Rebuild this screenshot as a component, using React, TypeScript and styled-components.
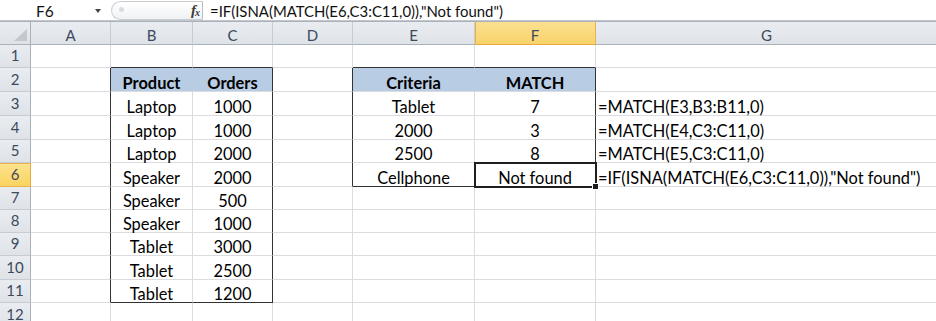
import React from 'react';
import styled, { createGlobalStyle, css } from 'styled-components';

const GlobalStyle = createGlobalStyle`
  html, body { margin: 0; padding: 0; background: #fff; overflow: hidden; }
  body { width: 936px; height: 321px; font-family: Lato, "Liberation Sans", sans-serif; }
`;

const Window = styled.div`
  width: 936px;
  height: 321px;
  overflow: hidden;
  display: flex;
  flex-direction: column;
  background: #fff;
`;

const FormulaBar = styled.div`
  display: flex;
  align-items: stretch;
  height: 20px;
  background: #fff;
  font-size: 14.9px;
  color: #111;
`;

const NameBox = styled.div`
  width: 111px;
  box-sizing: border-box;
  padding: 1px 10px 0 36px;
  display: flex;
  align-items: center;
  font-size: 15.5px;
`;

const DropArrow = styled.span`
  margin-left: auto;
  width: 0;
  height: 0;
  border-left: 3.5px solid transparent;
  border-right: 3.5px solid transparent;
  border-top: 4px solid #444;
`;

const Capsule = styled.div`
  width: 92px;
  box-sizing: border-box;
  margin: 1px 0 0;
  border: 1px solid #c9cdd2;
  border-right-color: #b8bdc4;
  border-radius: 10px 0 0 10px;
  background: linear-gradient(#ffffff, #f1f2f4);
  display: flex;
  align-items: center;
  padding: 0 3px 0 7px;
`;

const Knob = styled.span`
  width: 5px;
  height: 5px;
  border-radius: 50%;
  background: #d8dce1;
  margin-top: -3px;
`;

const Fx = styled.span`
  margin-left: auto;
  font-family: "Liberation Serif", serif;
  font-style: italic;
  font-weight: bold;
  font-size: 15px;
  color: #3a3a3a;
  letter-spacing: -1px;
  sub { font-size: 10px; vertical-align: -1px; }
`;

const FormulaText = styled.div`
  flex: 1;
  padding: 2px 0 0 7px;
  display: flex;
  align-items: center;
  white-space: nowrap;
`;

const Divider = styled.div`
  height: 5px;
  box-sizing: border-box;
  background: #eef0f2;
  border-top: 1px solid #c3c7cd;
  border-bottom: 1px solid #aab1b9;
`;

const Sheet = styled.div<{ $rows: string }>`
  display: grid;
  grid-template-columns: 31px 80px 82px 80px 80px 122px 121px 342px;
  grid-template-rows: 23px ${(p) => p.$rows};
  font-size: 16.4px;
  color: #000;
`;

const headerBase = css`
  box-sizing: border-box;
  display: flex;
  align-items: center;
  justify-content: center;
  font-size: 15px;
  color: #3b4a5e;
  background: linear-gradient(#e9ecf0, #dfe3e8);
`;

const Corner = styled.div`
  ${headerBase};
  border-right: 1px solid #a9b1ba;
  border-bottom: 1px solid #a9b1ba;
  align-items: flex-end;
  justify-content: flex-end;
  padding: 0 3px 3px 0;
`;

const ColHeader = styled.div<{ $sel?: boolean }>`
  ${headerBase};
  border-right: 1px solid #c7ccd3;
  border-bottom: 1px solid #a9b1ba;
  padding-top: 4px;
  ${(p) =>
    p.$sel &&
    css`
      background: linear-gradient(#fbe08f, #f8d36a);
      border-right-color: #eab24e;
      border-bottom-color: #e9a93c;
      box-shadow: inset 1px 0 0 #eab24e;
    `}
`;

const RowHeader = styled.div<{ $sel?: boolean }>`
  ${headerBase};
  border-right: 1px solid #a9b1ba;
  border-bottom: 1px solid #c7ccd3;
  align-items: flex-end;
  padding-bottom: 3px;
  ${(p) =>
    p.$sel &&
    css`
      background: linear-gradient(#fde38f, #fad462);
      border-right-color: #e9a93c;
      border-bottom-color: #eab24e;
      box-shadow: inset 0 1px 0 #eab24e;
    `}
`;

const GRID = '#dadcdf';
const DARK = '#333333';
const FILL = '#b8cce4';

const Cell = styled.div<{
  $align: 'center' | 'left';
  $bold?: boolean;
  $fill?: boolean;
  $right: string;
  $bottom: string;
  $sel?: boolean;
}>`
  box-sizing: border-box;
  position: relative;
  display: flex;
  align-items: flex-end;
  justify-content: ${(p) => (p.$align === 'center' ? 'center' : 'flex-start')};
  padding: 0 2px 0 2px;
  line-height: 1;
  white-space: nowrap;
  font-weight: ${(p) => (p.$bold ? 700 : 400)};
  background: ${(p) => (p.$fill ? FILL : '#fff')};
  border-right: 1px solid ${(p) => p.$right};
  border-bottom: 1px solid ${(p) => p.$bottom};
  ${(p) =>
    p.$sel &&
    css`
      z-index: 1;
      outline: 2px solid #1e1e1e;
      outline-offset: -1px;
      &::after {
        content: '';
        position: absolute;
        right: -4px;
        bottom: -4px;
        width: 5px;
        height: 5px;
        background: #1e1e1e;
        border: 1px solid #fff;
      }
    `}
`;

const COLS = ['A', 'B', 'C', 'D', 'E', 'F', 'G'];
const ROW_HEIGHTS = [23, 24, 24, 24, 23, 24, 23, 23, 23, 24, 23, 24];

const DATA: Record<string, string> = {
  B2: 'Product', C2: 'Orders', E2: 'Criteria', F2: 'MATCH',
  B3: 'Laptop', C3: '1000', E3: 'Tablet', F3: '7', G3: '=MATCH(E3,B3:B11,0)',
  B4: 'Laptop', C4: '1000', E4: '2000', F4: '3', G4: '=MATCH(E4,C3:C11,0)',
  B5: 'Laptop', C5: '2000', E5: '2500', F5: '8', G5: '=MATCH(E5,C3:C11,0)',
  B6: 'Speaker', C6: '2000', E6: 'Cellphone', F6: 'Not found',
  G6: '=IF(ISNA(MATCH(E6,C3:C11,0)),"Not found")',
  B7: 'Speaker', C7: '500',
  B8: 'Speaker', C8: '1000',
  B9: 'Tablet', C9: '3000',
  B10: 'Tablet', C10: '2500',
  B11: 'Tablet', C11: '1200',
};

const TABLES = [
  { c0: 1, c1: 2, r0: 2, r1: 11 },
  { c0: 4, c1: 5, r0: 2, r1: 6 },
];

const tableAt = (r: number, c: number) =>
  TABLES.find((t) => r >= t.r0 && r <= t.r1 && c >= t.c0 && c <= t.c1);

const SEL = { r: 6, c: 5 };

export default function App() {
  const rows = ROW_HEIGHTS.map((h, i) => i + 1);
  return (
    <Window>
      <GlobalStyle />
      <FormulaBar>
        <NameBox>
          F6
          <DropArrow />
        </NameBox>
        <Capsule>
          <Knob />
          <Fx>
            f<sub>x</sub>
          </Fx>
        </Capsule>
        <FormulaText>=IF(ISNA(MATCH(E6,C3:C11,0)),"Not found")</FormulaText>
      </FormulaBar>
      <Divider />
      <Sheet $rows={ROW_HEIGHTS.map((h) => `${h}px`).join(' ')}>
        <Corner>
          <svg width="13" height="12" viewBox="0 0 13 12">
            <polygon points="13,0 13,12 0,12" fill="#c3c8ce" />
          </svg>
        </Corner>
        {COLS.map((c, i) => (
          <ColHeader key={c} $sel={i === SEL.c}>
            {c}
          </ColHeader>
        ))}
        {rows.map((r) => (
          <React.Fragment key={r}>
            <RowHeader $sel={r === SEL.r}>{r}</RowHeader>
            {COLS.map((col, c) => {
              const t = tableAt(r, c);
              const fill = !!t && r === t.r0;
              const tRight = tableAt(r, c + 1);
              const tBelow = tableAt(r + 1, c);
              const rightDark = (t && c === t.c1) || (tRight && c + 1 === tRight.c0);
              const bottomDark = (t && r === t.r1) || (tBelow && r + 1 === tBelow.r0);
              const rightColor = rightDark ? DARK : fill && tRight === t ? FILL : GRID;
              const bottomColor = bottomDark ? DARK : GRID;
              const key = `${col}${r}`;
              return (
                <Cell
                  key={key}
                  $align={col === 'G' ? 'left' : 'center'}
                  $bold={fill}
                  $fill={fill}
                  $right={rightColor}
                  $bottom={bottomColor}
                  $sel={r === SEL.r && c === SEL.c}
                >
                  {DATA[key] ?? ''}
                </Cell>
              );
            })}
          </React.Fragment>
        ))}
      </Sheet>
    </Window>
  );
}
